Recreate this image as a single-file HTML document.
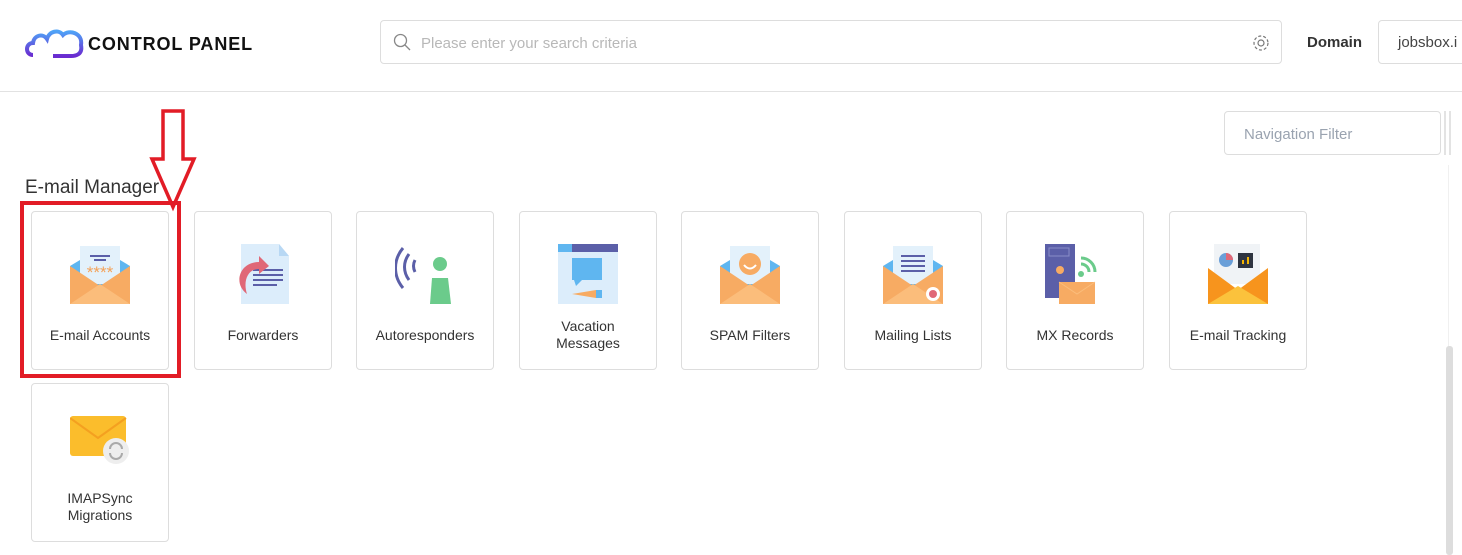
<!DOCTYPE html>
<html><head><style>
body{margin:0;width:1462px;height:555px;overflow:hidden;background:#fff;font-family:"Liberation Sans",sans-serif;position:relative}
.hdr{position:absolute;left:0;top:0;width:1462px;height:91px;border-bottom:1px solid #e2e2e2}
.search{position:absolute;left:380px;top:20px;width:900px;height:42px;border:1px solid #ddd;border-radius:4px}
.search span{position:absolute;left:40px;top:14px;font-size:15px;color:#b8b8b8}
.dom{position:absolute;left:1307px;top:34px;font-weight:bold;font-size:15px;color:#333}
.dbox{position:absolute;left:1378px;top:20px;width:100px;height:42px;border:1px solid #ddd;border-radius:4px}
.dbox span{position:absolute;left:19px;top:13px;font-size:15px;color:#444}
.nf{position:absolute;left:1224px;top:111px;width:215px;height:42px;border:1px solid #ddd;border-radius:4px}
.nf span{position:absolute;left:19px;top:14px;font-size:15px;color:#9aa3b0}
h2{position:absolute;left:25px;top:177px;margin:0;font-weight:normal;font-size:19px;color:#333}
.card{position:absolute;width:136px;height:157px;border:1px solid #ddd;border-radius:4px;text-align:center}
.card svg{position:absolute;left:38px;top:32px}
.card .t{position:absolute;left:0;right:0;top:115px;font-size:14px;color:#333;line-height:17px}
.card .t2{top:106px}
</style></head><body>
<div class="hdr">
<svg style="position:absolute;left:25px;top:25px" width="60" height="36" viewBox="0 0 60 36"><defs><linearGradient id="g" x1="0" y1="0" x2="0" y2="1"><stop offset="0" stop-color="#4fa3f7"/><stop offset="1" stop-color="#6a2bd0"/></linearGradient></defs><path d="M8 30 C0 30 0 18 8 18 C9 10 18 8 22 14 C24 6 34 4 38 10 C44 4 58 8 56 20 C58 30 50 31 46 31 L28 31" fill="none" stroke="url(#g)" stroke-width="4"/><path d="M8 30 L24 30" stroke="url(#g)" stroke-width="4"/></svg>
<div style="position:absolute;left:88px;top:34px;font-weight:bold;font-size:18px;color:#111;letter-spacing:.9px">CONTROL PANEL</div>
<div class="search"><svg style="position:absolute;left:12px;top:12px" width="18" height="18" viewBox="0 0 18 18"><circle cx="7.5" cy="7.5" r="6" fill="none" stroke="#888" stroke-width="1.3"/><path d="M12 12l5 5" stroke="#888" stroke-width="1.3"/></svg><span>Please enter your search criteria</span>
<svg style="position:absolute;left:871px;top:13px" width="18" height="18" viewBox="0 0 18 18"><circle cx="9" cy="9" r="3" fill="none" stroke="#777" stroke-width="1.2"/><circle cx="9" cy="9" r="7" fill="none" stroke="#777" stroke-width="1.2" stroke-dasharray="3 2"/></svg></div>
<div class="dom">Domain</div>
<div class="dbox"><span>jobsbox.i</span></div>
</div>
<div class="nf"><span>Navigation Filter</span></div>
<div style="position:absolute;left:1444px;top:111px;width:2px;height:44px;background:#e3e3e3"></div>
<div style="position:absolute;left:1449px;top:111px;width:2px;height:44px;background:#e3e3e3"></div>
<div style="position:absolute;left:1448px;top:165px;width:1px;height:390px;background:#f0f0f0"></div>
<div style="position:absolute;left:1446px;top:346px;width:7px;height:209px;background:#ddd;border-radius:3px"></div>
<h2>E-mail Manager</h2>

<div class="card" style="left:31px;top:211px"><svg width="60" height="60" viewBox="0 0 60 60"><path d="M0 22 L30 4 L60 22 V60 H0Z" fill="#5fb6f0"/><rect x="10" y="2" width="40" height="38" fill="#e3f1fb"/><path d="M20 12h20M24 16h12" stroke="#5b5fa8" stroke-width="2"/><text x="30" y="34" font-size="17" fill="#f4a259" text-anchor="middle">****</text><path d="M0 22 L30 42 L60 22 V60 H0Z" fill="#f7ab63"/><path d="M0 60 L30 40 L60 60Z" fill="#fbbd7b"/></svg><div class="t">E-mail Accounts</div></div>
<div class="card" style="left:194px;top:211px"><svg width="60" height="60" viewBox="0 0 60 60"><path d="M8 0 H46 L56 12 V60 H8Z" fill="#dcedfb"/><path d="M46 0 L56 12 H46Z" fill="#b8d8f4"/><path d="M20 26h30M20 31h30M20 36h30M20 41h24" stroke="#5b5fa8" stroke-width="2"/><path d="M14 50 C0 40 6 18 26 18 V12 L36 22 L26 30 V25 C14 25 10 38 14 50Z" fill="#e06877"/></svg><div class="t">Forwarders</div></div>
<div class="card" style="left:356px;top:211px"><svg width="60" height="60" viewBox="0 0 60 60"><path d="M8 4 C-2 16 -2 32 8 44M14 10 C8 18 8 28 14 36M20 16 C18 20 18 24 20 28" fill="none" stroke="#5b5fa8" stroke-width="3"/><circle cx="45" cy="20" r="7" fill="#6bcb8b"/><path d="M35 60 L37 34 H53 L56 60Z" fill="#6bcb8b"/></svg><div class="t">Autoresponders</div></div>
<div class="card" style="left:519px;top:211px"><svg width="60" height="60" viewBox="0 0 60 60"><rect x="0" y="0" width="60" height="60" fill="#dcedfb"/><rect x="0" y="0" width="60" height="8" fill="#5b5fa8"/><rect x="0" y="0" width="14" height="8" fill="#5fb6f0"/><rect x="14" y="14" width="30" height="22" fill="#5fb6f0"/><path d="M16 36 h8 l-6 6z" fill="#5fb6f0"/><path d="M14 50 L38 46 V54Z" fill="#f7ab63"/><rect x="38" y="46" width="6" height="8" fill="#5fb6f0"/></svg><div class="t t2">Vacation<br>Messages</div></div>
<div class="card" style="left:681px;top:211px"><svg width="60" height="60" viewBox="0 0 60 60"><path d="M0 22 L30 4 L60 22 V60 H0Z" fill="#5fb6f0"/><rect x="10" y="2" width="40" height="38" fill="#e3f1fb"/><circle cx="30" cy="20" r="11" fill="#f7ab63"/><path d="M24 21 Q30 28 36 21" stroke="#fff" fill="none" stroke-width="2"/><path d="M0 22 L30 42 L60 22 V60 H0Z" fill="#f7ab63"/><path d="M0 60 L30 40 L60 60Z" fill="#fbbd7b"/></svg><div class="t">SPAM Filters</div></div>
<div class="card" style="left:844px;top:211px"><svg width="60" height="60" viewBox="0 0 60 60"><path d="M0 22 L30 4 L60 22 V60 H0Z" fill="#5fb6f0"/><rect x="10" y="2" width="40" height="38" fill="#e3f1fb"/><path d="M18 12h24M18 17h24M18 22h24M18 27h24" stroke="#5b5fa8" stroke-width="2"/><path d="M0 22 L30 42 L60 22 V60 H0Z" fill="#f7ab63"/><path d="M0 60 L30 40 L60 60Z" fill="#fbbd7b"/><circle cx="50" cy="50" r="7" fill="#fff"/><circle cx="50" cy="50" r="4" fill="#e06877"/></svg><div class="t">Mailing Lists</div></div>
<div class="card" style="left:1006px;top:211px"><svg width="60" height="60" viewBox="0 0 60 60"><rect x="0" y="0" width="30" height="54" fill="#5b5fa8"/><rect x="4" y="4" width="20" height="8" fill="none" stroke="#8a8ec8"/><circle cx="15" cy="26" r="4" fill="#f7ab63"/><path d="M36 14 A14 14 0 0 1 50 28M36 20 A8 8 0 0 1 44 28" stroke="#6bcb8b" stroke-width="3" fill="none"/><circle cx="36" cy="30" r="3" fill="#6bcb8b"/><rect x="14" y="38" width="36" height="22" fill="#f7ab63"/><path d="M14 38 L32 50 L50 38" stroke="#fbbd7b" fill="none"/></svg><div class="t">MX Records</div></div>
<div class="card" style="left:1169px;top:211px"><svg width="60" height="60" viewBox="0 0 60 60"><rect x="6" y="0" width="46" height="40" fill="#f0f3f6"/><circle cx="18" cy="16" r="7" fill="#6a9fd8"/><path d="M18 16 V9 A7 7 0 0 1 25 16Z" fill="#e06877"/><rect x="30" y="9" width="15" height="15" fill="#2e3440"/><path d="M35 20v-4M40 20v-7" stroke="#f4b400" stroke-width="2"/><path d="M0 24 L30 46 L60 24 V60 H0Z" fill="#f7941d"/><path d="M0 60 L30 42 L60 60Z" fill="#fbc23c"/></svg><div class="t">E-mail Tracking</div></div>
<div class="card" style="left:31px;top:383px"><svg width="60" height="60" viewBox="0 0 60 60"><rect x="0" y="0" width="56" height="40" rx="3" fill="#fbbd2c"/><path d="M0 2 L28 22 L56 2" stroke="#f4a020" fill="none" stroke-width="2"/><circle cx="46" cy="35" r="13" fill="#eee"/><path d="M40 33 A6 6 0 0 1 52 33M52 37 A6 6 0 0 1 40 37" stroke="#aaa" fill="none" stroke-width="2"/></svg><div class="t t2">IMAPSync<br>Migrations</div></div>

<div style="position:absolute;left:20px;top:201px;width:153px;height:169px;border:4px solid #e21c26"></div>
<svg style="position:absolute;left:148px;top:108px" width="50" height="104" viewBox="0 0 50 104"><path d="M15 3 H35 V51 H46 L25 99 L4 51 H15Z" fill="none" stroke="#e21c26" stroke-width="3.5"/></svg>
</body></html>
